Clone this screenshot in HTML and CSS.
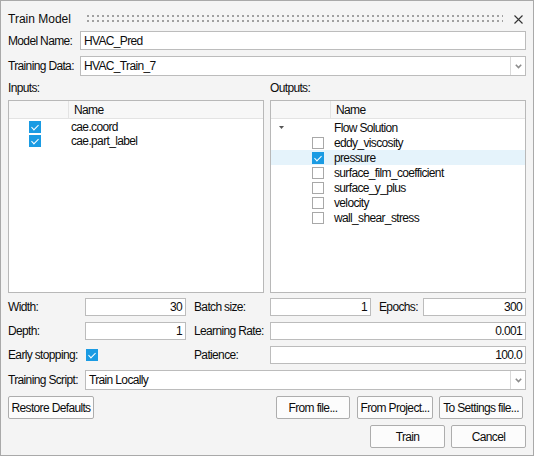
FILE: index.html
```html
<!DOCTYPE html>
<html>
<head>
<meta charset="utf-8">
<link rel="stylesheet" href="styles.css">
</head>
<body>
<div class="dialog">
  <div class="titlebar">
    <span class="title">Train Model</span>
    <svg class="grip" height="7"><defs><pattern id="dots" width="5" height="5" patternUnits="userSpaceOnUse"><rect width="2" height="2" fill="#a0a0a0"/></pattern></defs><rect width="100%" height="100%" fill="url(#dots)"/></svg>
    <svg class="close" width="9" height="9" viewBox="0 0 9 9"><path d="M0.5 0.5L8.5 8.5M8.5 0.5L0.5 8.5" stroke="#333" stroke-width="1.1" fill="none"/></svg>
  </div>

  <div class="row r-name">
    <span class="lbl lbl-top">Model Name:</span>
    <div class="field">HVAC_Pred</div>
  </div>
  <div class="row r-data">
    <span class="lbl lbl-top">Training Data:</span>
    <div class="combo">
      <span class="combo-text">HVAC_Train_7</span>
      <span class="drop"><svg width="7" height="5" viewBox="0 0 7 5"><path d="M0.8 0.8L3.5 3.5L6.2 0.8" stroke="#8c8c8c" stroke-width="1.6" fill="none"/></svg></span>
    </div>
  </div>

  <div class="lists">
    <div class="col">
      <div class="cap">Inputs:</div>
      <div class="listbox">
        <div class="head"><span class="hc1"></span><span class="hc2">Name</span></div>
        <div class="rows in-rows">
          <div class="irow"><span class="ic1"><span class="cb on"></span></span><span>cae.coord</span></div>
          <div class="irow"><span class="ic1"><span class="cb on"></span></span><span>cae.part_label</span></div>
        </div>
      </div>
    </div>
    <div class="col">
      <div class="cap">Outputs:</div>
      <div class="listbox">
        <div class="head"><span class="hc1"></span><span class="hc2">Name</span></div>
        <div class="rows out-rows">
          <div class="trow"><span class="gut"><svg class="arrow" width="5" height="3" viewBox="0 0 5 3"><path d="M0 0H5L2.5 3Z" fill="#555"/></svg></span><span>Flow Solution</span></div>
          <div class="trow"><span class="gut"><span class="cb"></span></span><span>eddy_viscosity</span></div>
          <div class="trow sel"><span class="gut"><span class="cb on"></span></span><span>pressure</span></div>
          <div class="trow"><span class="gut"><span class="cb"></span></span><span>surface_film_coefficient</span></div>
          <div class="trow"><span class="gut"><span class="cb"></span></span><span>surface_y_plus</span></div>
          <div class="trow"><span class="gut"><span class="cb"></span></span><span>velocity</span></div>
          <div class="trow"><span class="gut"><span class="cb"></span></span><span>wall_shear_stress</span></div>
        </div>
      </div>
    </div>
  </div>

  <div class="params">
    <span class="lbl">Width:</span>
    <div class="field num">30</div>
    <span class="lbl pl">Batch size:</span>
    <div class="field num">1</div>
    <span class="lbl pl">Epochs:</span>
    <div class="field num">300</div>

    <span class="lbl">Depth:</span>
    <div class="field num">1</div>
    <span class="lbl pl">Learning Rate:</span>
    <div class="field num span3">0.001</div>

    <span class="lbl">Early stopping:</span>
    <div class="cbcell"><span class="cb on"></span></div>
    <span class="lbl pl">Patience:</span>
    <div class="field num span3">100.0</div>
  </div>

  <div class="row r-script">
    <span class="lbl lbl-script">Training Script:</span>
    <div class="combo">
      <span class="combo-text">Train Locally</span>
      <span class="drop"><svg width="7" height="5" viewBox="0 0 7 5"><path d="M0.8 0.8L3.5 3.5L6.2 0.8" stroke="#8c8c8c" stroke-width="1.6" fill="none"/></svg></span>
    </div>
  </div>

  <div class="btnrow">
    <button class="btn b-restore">Restore Defaults</button>
    <span class="spacer"></span>
    <button class="btn b-file">From file...</button>
    <button class="btn b-proj">From Project...</button>
    <button class="btn b-set">To Settings file...</button>
  </div>
  <div class="btnrow end">
    <button class="btn b-std">Train</button>
    <button class="btn b-std">Cancel</button>
  </div>
</div>
</body>
</html>
```

FILE: styles.css
```css
* { box-sizing: border-box; }
html, body { margin: 0; padding: 0; background: #f4f4f4; }
body {
  font-family: "Liberation Sans", Arial, sans-serif;
  font-size: 12px;
  color: #0c0c0c;
}
.dialog {
  width: 534px;
  height: 456px;
  border: 1px solid #a9a9a9;
  background: #f4f4f4;
  padding: 0 7px;
  display: flex;
  flex-direction: column;
  letter-spacing: -0.65px;
}

/* title bar */
.titlebar {
  margin-top: 8px;
  height: 20px;
  display: flex;
  align-items: center;
}
.title { letter-spacing: 0; font-size: 12px; }
.grip {
  flex: 1;
  align-self: flex-start;
  margin: 6px 11px 0 16px;
  height: 7px;
}
.close { margin-right: 3px; }

/* form rows */
.row { display: flex; align-items: center; }
.r-name { margin-top: 2px; height: 19px; }
.r-data { margin-top: 6px; height: 20px; }
.lbl { white-space: nowrap; display: flex; align-items: center; }
.lbl-top { width: 72px; }
.lbl-script { width: 77px; }

.field {
  height: 100%;
  background: #fff;
  border: 1px solid #bcbcbc;
  padding: 0 3px;
  display: flex;
  align-items: center;
  white-space: nowrap;
}
.row .field, .row .combo { flex: 1; }
.num { justify-content: flex-end; padding-right: 3px; }

.combo {
  height: 100%;
  background: #fff;
  border: 1px solid #bcbcbc;
  display: flex;
  align-items: stretch;
}
.combo-text { flex: 1; padding-left: 3px; display: flex; align-items: center; }
.drop {
  width: 15px;
  border-left: 1px solid #d9d9d9;
  display: flex;
  align-items: center;
  justify-content: center;
}

/* lists */
.lists {
  margin-top: 5px;
  display: grid;
  grid-template-columns: 256px 256px;
  column-gap: 6px;
}
.cap { height: 14px; display: flex; align-items: center; }
.listbox {
  margin-top: 5px;
  height: 193px;
  background: #fff;
  border: 1px solid #b8b8b8;
}
.head {
  height: 18px;
  display: flex;
  background: #f7f7f7;
  border-bottom: 1px solid #e3e3e3;
}
.hc1 { width: 60px; border-right: 1px solid #e3e3e3; }
.hc2 { padding-left: 5px; display: flex; align-items: center; }
.rows { padding-top: 1px; }
.irow { height: 14px; display: flex; align-items: center; }
.ic1 { width: 62px; padding-left: 20px; display: flex; align-items: center; }

.trow { height: 15px; display: flex; align-items: center; }
.trow.sel { background: #e5f3fb; }
.gut { width: 63px; display: flex; align-items: center; }
.gut .cb { margin-left: 41px; }
.arrow { margin-left: 8px; }

/* checkbox */
.cb {
  display: inline-block;
  width: 12px;
  height: 12px;
  border: 1px solid #a8a8a8;
  background: #fff;
  position: relative;
}
.cb.on {
  border-color: #1a9be3;
  background: #1a9be3;
}
.cb.on::after {
  content: "";
  position: absolute;
  left: 3px;
  top: 1px;
  width: 3px;
  height: 6px;
  border-right: 1.8px solid #fff;
  border-bottom: 1.8px solid #fff;
  transform: rotate(45deg);
}

/* params */
.params {
  margin-top: 5px;
  display: grid;
  grid-template-columns: 77px 101px 84px 101px 52px 1fr;
  grid-auto-rows: 18px;
  row-gap: 6px;
}
.pl { padding-left: 8px; }
.span3 { grid-column: span 3; }
.cbcell { display: flex; align-items: center; padding-left: 1px; }

.r-script { margin-top: 6px; height: 20px; }

/* buttons */
.btnrow { display: flex; height: 23px; margin-top: 6px; }
.btnrow.end { margin-top: 6px; justify-content: flex-end; column-gap: 6px; }
.spacer { flex: 1; }
.btn {
  font: inherit;
  letter-spacing: inherit;
  color: #0c0c0c;
  height: 23px;
  padding: 0;
  background: #fcfcfc;
  border: 1px solid #adadad;
  border-radius: 2px;
}
.b-restore { width: 86px; }
.b-file { width: 74px; }
.b-proj { width: 76px; margin-left: 7px; }
.b-set { width: 84px; margin-left: 6px; margin-right: 3px; }
.b-std { width: 75px; }
```
